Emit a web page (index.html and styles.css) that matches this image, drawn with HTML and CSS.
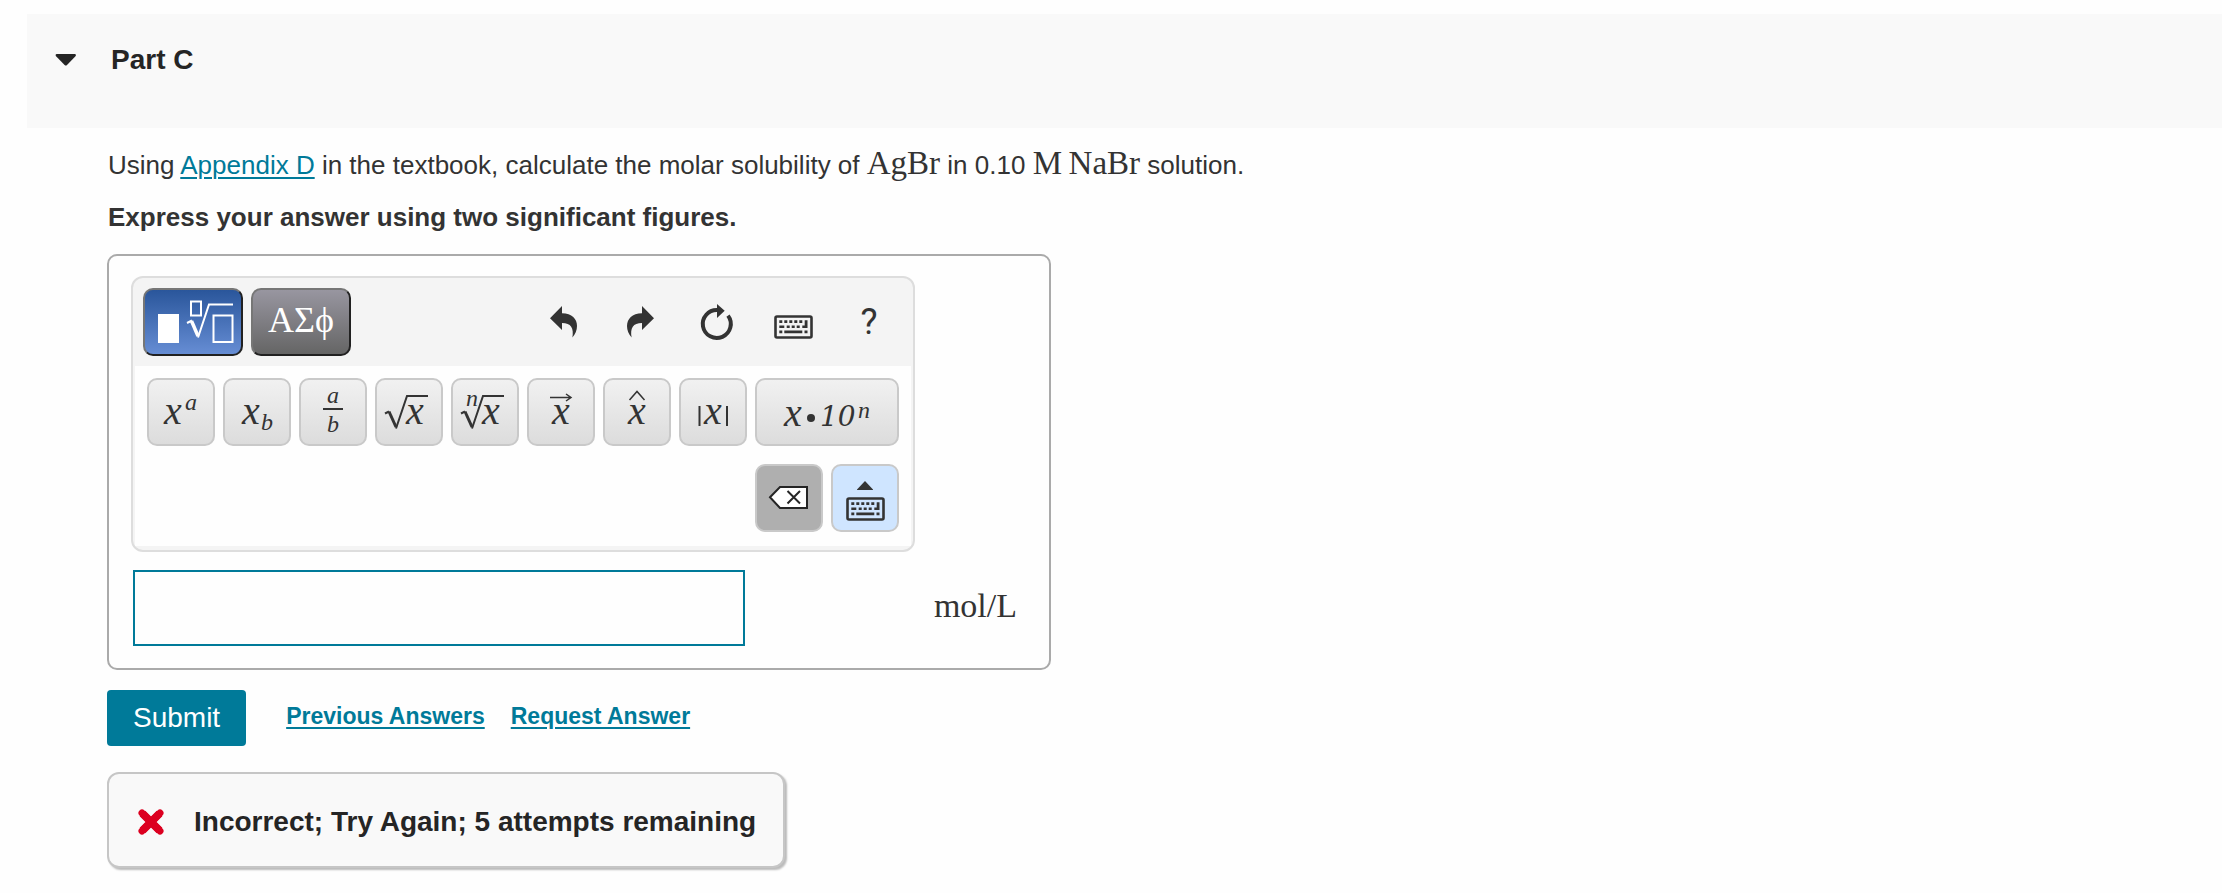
FILE: index.html
```html
<!DOCTYPE html>
<html lang="en">
<head>
<meta charset="utf-8">
<title>Part C</title>
<link rel="stylesheet" href="styles.css">
</head>
<body>
<svg class="defs" aria-hidden="true">
  <symbol id="keyboard" viewBox="0 0 39 24">
    <rect x="1.5" y="1.5" width="36" height="21" rx="1.5" fill="none" stroke="#333" stroke-width="2.6"/>
    <g fill="#333">
      <path d="M5.3 5.3h3v2.6h-3zM10.3 5.3h3v2.6h-3zM15.3 5.3h3v2.6h-3zM20.3 5.3h3v2.6h-3zM25.3 5.3h3v2.6h-3z"/>
      <path d="M5.3 10.5h5v2.6h-5zM12.7 10.5h3v2.6h-3zM17.7 10.5h3v2.6h-3zM22.7 10.5h3v2.6h-3zM30.7 5.3h2.8v7.8h-5.2v-2.6h2.4z"/>
      <path d="M5.3 15.6h3v2.6h-3zM10.3 15.6h18v2.6h-18zM30.5 15.6h3v2.6h-3z"/>
    </g>
  </symbol>
</svg>
<main class="page">
  <header class="part-header">
    <svg class="caret" viewBox="0 0 22 12" aria-hidden="true"><path d="M1.5 0h18.5q1.6 .6 .7 2L12 11q-1.2 1-2.4 0L.8 2Q0 .6 1.5 0z" fill="#252525"/></svg>
    <h1 class="part-title">Part C</h1>
  </header>
  <section class="content">
    <p class="line">Using <a class="link" href="#appendix">Appendix D</a> in the textbook, calculate the molar solubility of <span class="math">AgBr</span> in 0.10 <span class="math">M&#8201;NaBr</span> solution.</p>
    <p class="line strong">Express your answer using two significant figures.</p>

    <form class="answer" id="answer-form">
      <div class="editor">
        <div class="toolbar">
          <button type="button" class="tab tab-active" aria-label="Templates">
            <svg viewBox="0 0 96 64" fill="none" stroke="#fff" stroke-width="2">
              <rect x="13" y="24" width="21" height="29" fill="#fff" stroke="none"/>
              <rect x="46" y="11.500" width="10" height="14"/>
              <path d="M42 33l5-2.500"/>
              <path d="M46.500 31L53 46" stroke-width="3.500"/>
              <path d="M53 47.500L64 14.500H88"/>
              <rect x="68.500" y="25.500" width="19" height="26.500"/>
            </svg>
          </button>
          <button type="button" class="tab" aria-label="Symbols">ΑΣϕ</button>
          <div class="tools">
            <button type="button" class="tool" aria-label="Undo"><svg viewBox="0 0 68 68" fill="#333"><path d="M19 30.300L31 18v7.300C41 25.500 46 31 46 38c0 4-1.500 8-4.600 11.500C43 40 40 35 31 35v7z"/></svg></button>
            <button type="button" class="tool" aria-label="Redo"><svg viewBox="0 0 68 68" fill="#333"><path d="M47 30.300L35 18v7.300C25 25.500 20 31 20 38c0 4 1.500 8 4.600 11.500C23 40 26 35 35 35v7z"/></svg></button>
            <button type="button" class="tool" aria-label="Reset"><svg viewBox="0 0 68 68"><path d="M34.500 22A14 14 0 1 0 45 27.600" fill="none" stroke="#333" stroke-width="4"/><path d="M34 16l7.700 6.800L34 30z" fill="#333"/></svg></button>
            <button type="button" class="tool" aria-label="Keyboard shortcuts"><svg viewBox="0 0 68 68"><use href="#keyboard" x="15" y="27" width="39" height="24"/></svg></button>
            <button type="button" class="tool" aria-label="Help">?</button>
          </div>
        </div>
        <div class="palette">
          <div class="keys">
            <button type="button" class="key" aria-label="Exponent"><svg viewBox="0 0 64 64"><text class="x" x="15" y="44">x</text><text class="s" x="36" y="30">a</text></svg></button>
            <button type="button" class="key" aria-label="Subscript"><svg viewBox="0 0 64 64"><text class="x" x="17" y="44">x</text><text class="s" x="36" y="50">b</text></svg></button>
            <button type="button" class="key" aria-label="Fraction"><svg viewBox="0 0 64 64"><text class="s" x="26" y="23">a</text><path class="rule" d="M22 29H42"/><text class="s" x="26" y="52">b</text></svg></button>
            <button type="button" class="key" aria-label="Square root"><svg viewBox="0 0 64 64"><path class="rule" d="M8 33.500l4-2"/><path class="rule thick" d="M12 31.500L19 47"/><path class="rule" d="M19 48.500L30 16H51"/><text class="x" x="29" y="44">x</text></svg></button>
            <button type="button" class="key" aria-label="Nth root"><svg viewBox="0 0 64 64"><path class="rule" d="M8 33.500l4-2"/><path class="rule thick" d="M12 31.500L19 47"/><path class="rule" d="M19 48.500L30 16H51"/><text class="s" x="13" y="26">n</text><text class="x" x="29" y="44">x</text></svg></button>
            <button type="button" class="key" aria-label="Vector"><svg viewBox="0 0 64 64"><path class="fine" d="M21 17.500H42M37 14l5 3.500l-5 3.500"/><text class="x" x="23" y="44">x</text></svg></button>
            <button type="button" class="key" aria-label="Unit vector"><svg viewBox="0 0 64 64"><path class="fine" d="M24.500 20L32 11.500L39.500 20"/><text class="x" x="23" y="44">x</text></svg></button>
            <button type="button" class="key" aria-label="Absolute value"><svg viewBox="0 0 64 64"><path class="rule" d="M18.500 26V46M46 26V46"/><text class="x" x="23" y="44">x</text></svg></button>
            <button type="button" class="key key-wide" aria-label="Scientific notation"><svg viewBox="0 0 140 64"><text class="x" x="27" y="46">x</text><circle cx="54" cy="38" r="4" fill="#333"/><text class="d" x="63" y="46">10</text><text class="s" x="101" y="38">n</text></svg></button>
          </div>
          <div class="keys keys-end">
            <button type="button" class="key key-dark" aria-label="Delete"><svg viewBox="0 0 64 64" stroke="#252525" stroke-width="2"><path d="M13 31.300L23 21H50V42H23z" fill="#fff"/><path d="M30.500 25l12.500 12.500M43 25L30.500 37.500" fill="none"/></svg></button>
            <button type="button" class="key key-blue" aria-label="Show keyboard"><svg viewBox="0 0 64 64"><path d="M24 23.500L32 15L40 23.500V24H24z" fill="#333"/><use href="#keyboard" x="13" y="31" width="39" height="24"/></svg></button>
          </div>
        </div>
      </div>
      <div class="entry">
        <input class="field" id="value" type="text" aria-label="Answer">
        <label class="math unit" for="value">mol/L</label>
      </div>
    </form>

    <div class="actions">
      <button type="submit" form="answer-form" class="submit">Submit</button>
      <a class="link action-link" href="#previous">Previous Answers</a>
      <a class="link action-link" href="#request">Request Answer</a>
    </div>

    <div class="feedback" role="status">
      <svg class="cross" viewBox="0 0 28 28" aria-hidden="true"><path d="M5.500 5.500L22.500 22.500M22.500 5.500L5.500 22.500" stroke="#dc0020" stroke-width="8"/><path d="M5 5L23 23M23 5L5 23" stroke="#dc0020" stroke-width="7" stroke-linecap="round"/></svg>
      <span>Incorrect; Try Again; 5 attempts remaining</span>
    </div>
  </section>
</main>
</body>
</html>
```

FILE: styles.css
```css
* { box-sizing: border-box; }

body {
  margin: 0;
  background: #fefefe;
  color: #333;
  font: 26px/36px "Liberation Sans", Arial, sans-serif;
}

button { font: inherit; cursor: pointer; }
.defs { display: none; }

.page { padding: 14px 0 24px 27px; }

.part-header {
  display: flex;
  align-items: flex-start;
  gap: 34px;
  padding: 30px 28px 52px;
  background: #f9f9f9;
  color: #252525;
}
.caret { width: 22px; height: 12px; margin-top: 10px; }
.part-title { margin: 0; font-size: 28px; line-height: 32px; }

.content { padding: 19px 24px 0 80px; }
.line { margin: 0 0 16px; padding-left: 1px; }
.strong { margin-bottom: 19px; font-weight: bold; }
.link {
  color: #007a99;
  text-decoration-thickness: 2px;
  text-underline-offset: 3px;
}
.math {
  font-family: "Liberation Serif", "Times New Roman", serif;
  font-size: 33px;
  line-height: 0;
}

.answer {
  width: 944px;
  max-width: 100%;
  padding: 20px 22px 22px;
  border: 2px solid #aaa;
  border-radius: 10px;
}
.editor {
  width: 784px;
  max-width: 100%;
  padding: 0 2px 4px;
  border: 2px solid #ddd;
  border-radius: 12px;
  background: #f4f4f4;
}
.toolbar { display: flex; gap: 8px; padding: 10px 8px; }
.tab {
  width: 100px;
  height: 68px;
  padding: 0 0 4px;
  border: 2px solid;
  border-color: #767676 #212121 #212121 #767676;
  border-radius: 10px;
  background: linear-gradient(#9896a0, #656565);
  color: #fff;
  font: 36px/60px "Liberation Serif", "Times New Roman", serif;
}
.tab-active { padding: 0; background: linear-gradient(#2a569b, #668dd4); }
.tab svg, .tool svg, .key svg { display: block; width: 100%; height: 100%; }
.tools { display: flex; gap: 8px; margin-left: auto; }
.tool {
  width: 68px;
  height: 68px;
  padding: 0;
  border: 0;
  background: none;
  color: #333;
  font: 36px/68px Roboto, sans-serif;
}

.palette {
  display: flex;
  flex-direction: column;
  gap: 18px;
  padding: 12px 12px 14px;
  background: #fefefe;
}
.keys { display: flex; flex-wrap: wrap; gap: 8px; }
.keys-end { justify-content: flex-end; }
.key {
  width: 68px;
  height: 68px;
  padding: 0;
  border: 2px solid #c9c9c9;
  border-radius: 10px;
  background: linear-gradient(#f1f1f1, #dcdcdc);
}
.key-wide { width: 144px; }
.key-dark { background: #afafaf; }
.key-blue { background: #cfe5ff; }
.key text { fill: #333; font-family: "Liberation Serif", "Times New Roman", serif; font-style: italic; }
.key .x { font-size: 40px; }
.key .s { font-size: 24px; }
.key .d { font-family: "DejaVu Serif", serif; font-size: 28px; }
.rule { fill: none; stroke: #333; stroke-width: 2; }
.thick { stroke-width: 3; }
.fine { fill: none; stroke: #333; stroke-width: 1.5; }

.entry {
  display: flex;
  align-items: center;
  justify-content: space-between;
  margin-top: 18px;
  padding: 0 10px 0 2px;
}
.field {
  width: 612px;
  height: 76px;
  padding: 0 12px;
  border: 2px solid #007a99;
  background: #fefefe;
  color: #333;
  font: inherit;
  outline: 0;
}
.unit { padding-bottom: 4px; font-size: 34px; line-height: 36px; }

.actions { display: flex; align-items: center; gap: 26px; margin-top: 20px; }
.submit {
  height: 56px;
  margin-right: 14px;
  padding: 0 26px;
  border: 0;
  border-radius: 4px;
  background: #007a99;
  color: #fff;
  font-size: 28px;
}
.action-link { font-size: 23px; font-weight: bold; padding-bottom: 4px; }

.feedback {
  display: flex;
  align-items: center;
  gap: 29px;
  width: fit-content;
  margin-top: 26px;
  padding: 30px 27px 26px 28px;
  border: 2px solid #c6c6c6;
  border-radius: 12px;
  background: #f9f9f9;
  box-shadow: 2px 2px 2px #bbb;
  color: #252525;
  font-size: 28px;
  font-weight: bold;
}
.cross { width: 28px; height: 28px; }
```
